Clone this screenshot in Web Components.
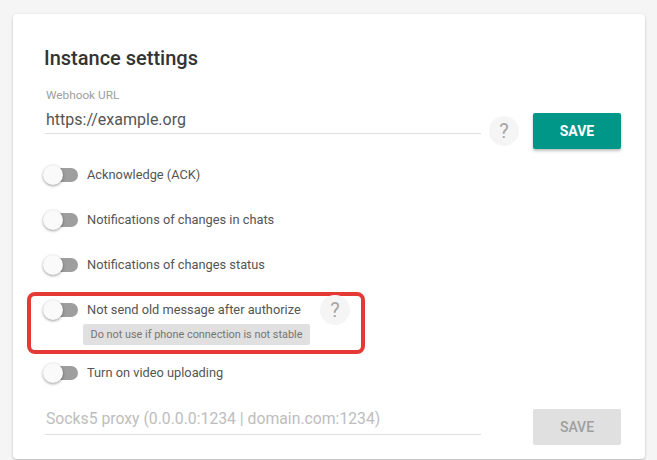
<!DOCTYPE html>
<html>
<head>
<meta charset="utf-8">
<title>Instance settings</title>
<style>
  html, body { margin: 0; height: 460px; overflow: hidden; background: #f5f5f5; }
  body { font-family: Roboto, "Liberation Sans", sans-serif; }
</style>
</head>
<body>
<template id="settings-card-tpl">
  <style>
    :host {
      display: block;
      width: 632px;
      height: 445px;
      margin: 14px 0 0 13px;
      box-sizing: border-box;
      padding: 30px 24px 0 31px;
      background: #fff;
      border-radius: 4px;
      box-shadow: 0 1px 3px rgba(0, 0, 0, .2), 0 1px 1px rgba(0, 0, 0, .08);
    }
    h2 { margin: 0; font-size: 20px; line-height: 28px; font-weight: 500; color: #333; }
  </style>
  <h2><slot name="title"></slot></h2>
  <slot></slot>
</template>

<template id="text-row-tpl">
  <style>
    :host { display: flex; align-items: flex-start; height: 66px; margin-top: 13px; }
    .field { width: 436px; margin: 0 8px 0 1px; height: 48px; flex: none; border-bottom: 1px solid #e0e0e0; display: flex; flex-direction: column; }
    .label { height: 12px; font-size: 11.8px; line-height: 12px; color: #9e9e9e; margin-top: 4px; padding-left: 1px; }
    .value { font-size: 16px; line-height: 24px; margin-top: 7px; padding-left: 1px; color: #555; white-space: nowrap; }
    :host([placeholder]) { height: 36px; }
    :host([placeholder]) .field { height: 25px; }
    :host([placeholder]) .label { display: none; }
    :host([placeholder]) .value { margin-top: -2px; color: #bdbdbd; font-size: 15.75px; }
    .spacer { width: 30px; flex: none; }
  </style>
  <div class="field">
    <div class="label"><slot name="label"></slot></div>
    <div class="value"><slot></slot></div>
  </div>
  <slot name="help"><div class="spacer"></div></slot>
  <slot name="action"></slot>
</template>

<template id="help-dot-tpl">
  <style>
    :host { display: flex; flex: none; align-items: center; justify-content: center; width: 30px; height: 30px; border-radius: 50%; background: #f5f5f5; color: #a6a6a6; font-size: 20px; line-height: 30px; }
  </style>
  ?
</template>

<template id="x-button-tpl">
  <style>
    :host { display: flex; flex: none; align-items: center; justify-content: center; width: 88px; height: 36px; border-radius: 2px; background: #009688; color: #fff; font-size: 14px; font-weight: 700; box-shadow: 0 2px 3px rgba(0, 0, 0, .25); }
    :host([disabled]) { background: #e0e0e0; color: #9e9e9e; font-weight: 500; box-shadow: none; }
  </style>
  <slot></slot>
</template>

<template id="toggle-row-tpl">
  <style>
    :host { display: flex; align-items: center; height: 20px; font-size: 12.8px; line-height: 20px; color: #555; }
    .switch { position: relative; flex: none; width: 33px; height: 14px; border-radius: 7px; background: #9e9e9e; margin: 0 9px 0 1px; }
    .knob { position: absolute; left: -2px; top: -3px; width: 20px; height: 20px; border-radius: 50%; background: #fafafa; box-shadow: 0 1px 3px rgba(0, 0, 0, .4); }
    .text { white-space: nowrap; }
  </style>
  <div class="switch"><div class="knob"></div></div>
  <div class="text"><slot></slot></div>
</template>

<template id="warn-box-tpl">
  <style>
    :host { display: block; width: 338px; height: 62px; box-sizing: border-box; margin-left: -17px; padding: 4px 0 0 13px; border: 4px solid #e53935; border-radius: 8px; }
    .top { display: flex; align-items: flex-start; height: 20px; }
    .top ::slotted(toggle-row) { width: 276px; }
    .note { display: inline-block; margin: 4px 0 0 39px; padding: 0 7.5px; height: 21px; line-height: 21px; font-size: 10.88px; color: #757575; background: #e0e0e0; border-radius: 2px; white-space: nowrap; }
    .help { margin-top: -5px; }
  </style>
  <div class="top"><slot name="row"></slot><div class="help"><slot name="help"></slot></div></div>
  <div class="note"><slot></slot></div>
</template>

<settings-card>
  <span slot="title">Instance settings</span>
  <text-row>
    <span slot="label">Webhook URL</span>
    https://example.org
    <help-dot slot="help" style="margin-top:31px"></help-dot>
    <x-button slot="action" style="margin:28px 0 0 14px">SAVE</x-button>
  </text-row>
  <toggle-row style="margin-top:14px">Acknowledge (ACK)</toggle-row>
  <toggle-row style="margin-top:25px">Notifications of changes in chats</toggle-row>
  <toggle-row style="margin-top:25px">Notifications of changes status</toggle-row>
  <warn-box style="margin-top:17px">
    <toggle-row slot="row">Not send old message after authorize</toggle-row>
    <help-dot slot="help"></help-dot>
    Do not use if phone connection is not stable
  </warn-box>
  <toggle-row style="margin-top:9px">Turn on video uploading</toggle-row>
  <text-row placeholder style="margin-top:26px">
    Socks5 proxy (0.0.0.0:1234 | domain.com:1234)
    <x-button slot="action" disabled style="margin-left:14px">SAVE</x-button>
  </text-row>
</settings-card>

<script>
  function define (name, tplId) {
    customElements.define(name, class extends HTMLElement {
      constructor () {
        super();
        const tpl = document.getElementById(tplId);
        this.attachShadow({ mode: "open" }).appendChild(tpl.content.cloneNode(true));
      }
    });
  }

  define("settings-card", "settings-card-tpl");
  define("text-row", "text-row-tpl");
  define("help-dot", "help-dot-tpl");
  define("x-button", "x-button-tpl");
  define("toggle-row", "toggle-row-tpl");
  define("warn-box", "warn-box-tpl");
</script>
</body>
</html>
